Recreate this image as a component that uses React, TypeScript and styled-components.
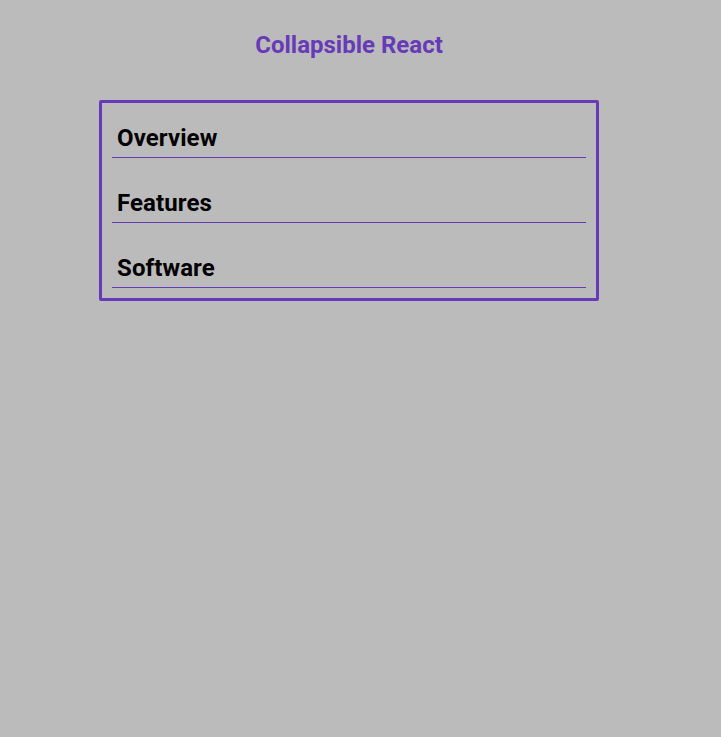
import React, { useState } from 'react';
import styled, { createGlobalStyle } from 'styled-components';

const GlobalStyle = createGlobalStyle`
  html, body {
    margin: 0;
    padding: 0;
    background: #bbbbbb;
    font-family: Roboto, "Liberation Sans", Arial, sans-serif;
  }
`;

const Page = styled.div`
  width: 698px;
  padding-top: 31px;
`;

const Title = styled.h1`
  margin: 0 0 41px;
  font-size: 24px;
  line-height: 28px;
  font-weight: 700;
  text-align: center;
  color: #673ab7;
`;

const Accordion = styled.div`
  width: 500px;
  box-sizing: border-box;
  margin: 0 auto;
  border: 3px solid #673ab7;
  border-radius: 2px;
  padding: 0 10px 10px;
  display: flex;
  flex-direction: column;
  gap: 10px;
`;

const Item = styled.div`
  border-bottom: 1px solid #673ab7;
`;

const Header = styled.h2`
  margin: 0;
  padding: 21px 5px 5px;
  font-size: 24px;
  line-height: 28px;
  font-weight: 700;
  letter-spacing: 0.1px;
  color: #000;
  cursor: pointer;
  user-select: none;
`;

const Body = styled.div`
  padding: 0 5px 10px;
  font-size: 16px;
  color: #222;
`;

const sections = [
  { title: 'Overview', text: 'A simple collapsible component built with React.' },
  { title: 'Features', text: 'Open and close each section independently.' },
  { title: 'Software', text: 'React, TypeScript and styled-components.' },
];

function App() {
  const [open, setOpen] = useState<number | null>(null);

  return (
    <Page>
      <GlobalStyle />
      <Title>Collapsible React</Title>
      <Accordion>
        {sections.map((s, i) => (
          <Item key={s.title}>
            <Header onClick={() => setOpen(open === i ? null : i)}>{s.title}</Header>
            {open === i && <Body>{s.text}</Body>}
          </Item>
        ))}
      </Accordion>
    </Page>
  );
}

export default App;
